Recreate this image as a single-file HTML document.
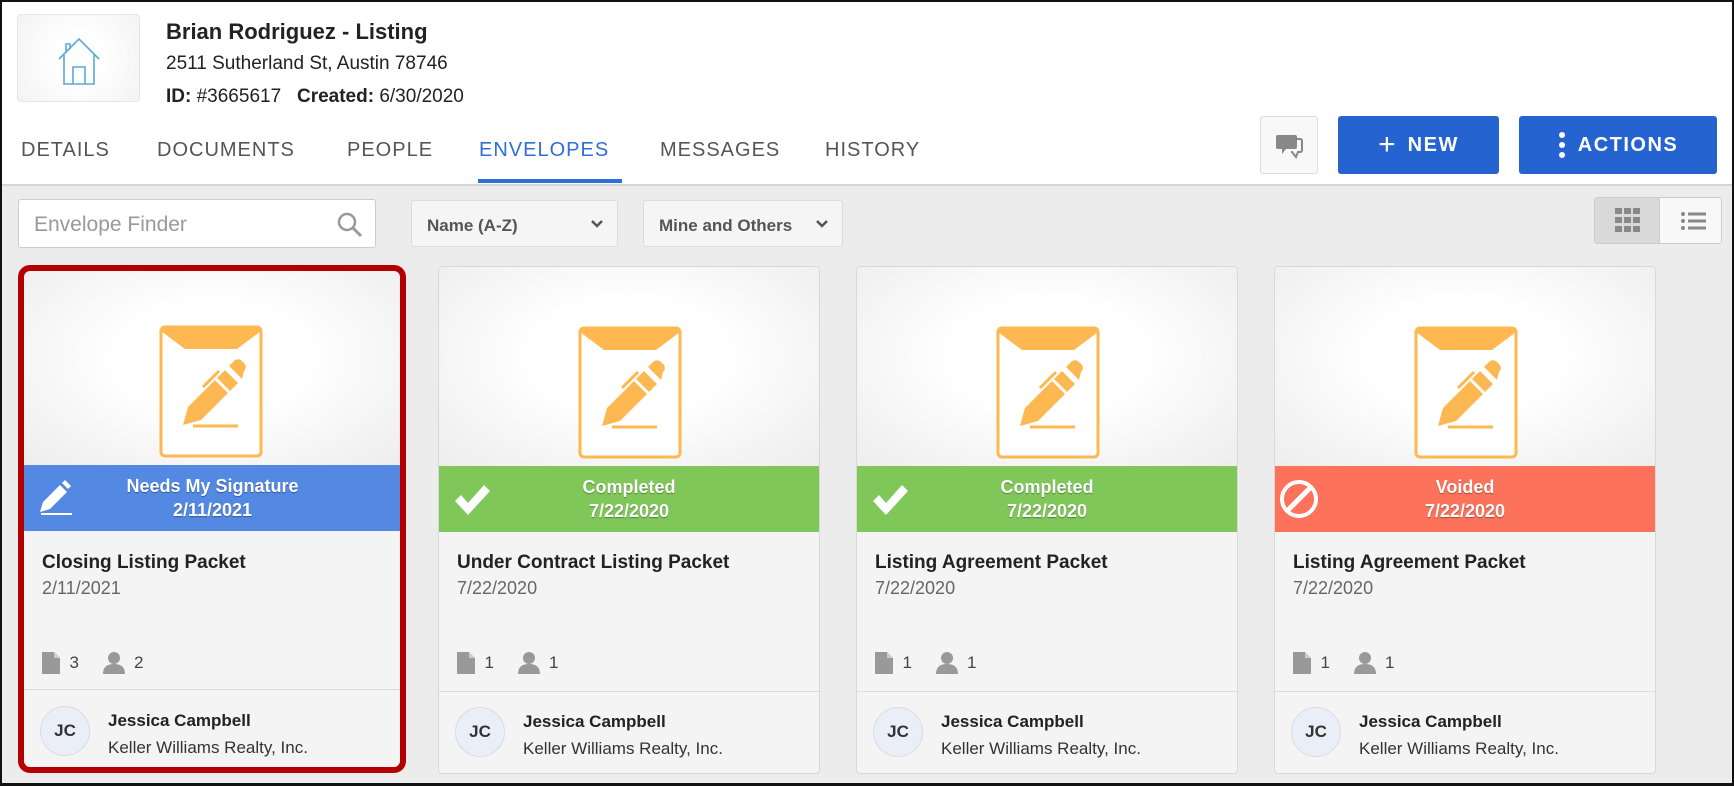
<!DOCTYPE html>
<html><head><meta charset="utf-8"><style>
*{box-sizing:border-box;margin:0;padding:0}
body{width:1734px;height:786px;overflow:hidden;font-family:"Liberation Sans",Arial,sans-serif;background:#ececec;position:relative}
.frame{position:absolute;left:0;top:0;width:1734px;height:786px;border:2px solid #111;border-bottom-width:3px;pointer-events:none;z-index:10}
.header{position:absolute;left:0;top:0;width:1734px;height:186px;background:#fff;border-bottom:2px solid #d6d6d6}
.house{position:absolute;left:17px;top:14px;width:123px;height:88px;border:1px solid #e6e6e6;border-radius:4px;background:radial-gradient(circle,#fff 30%,#f3f3f3 100%)}
.t1{position:absolute;left:166px;top:19px;font-size:22px;font-weight:bold;color:#222}
.t2{position:absolute;left:166px;top:53px;font-size:19px;color:#222}
.t3{position:absolute;left:166px;top:86px;font-size:19px;color:#222}
.tab{position:absolute;top:139px;font-size:20px;letter-spacing:1px;color:#555}
.ul{position:absolute;left:478px;top:179px;width:144px;height:4px;background:#2f6fd9}
.btn{position:absolute;top:116px;height:58px;background:#2563d0;border-radius:3px;color:#fff;font-weight:bold;font-size:20px;letter-spacing:1.5px;display:flex;align-items:center;justify-content:center}
.chat{position:absolute;left:1260px;top:116px;width:58px;height:58px;border:1px solid #ddd;border-radius:3px;background:#f8f8f8}
.search{position:absolute;left:18px;top:199px;width:358px;height:49px;border:1px solid #ccc;border-radius:3px;background:#fff;font-size:21px;color:#999;padding:13px 0 0 15px}
.dd{position:absolute;top:200px;height:47px;border:1px solid #ddd;border-radius:3px;background:#f5f5f5;font-size:17px;font-weight:bold;color:#555;padding:15px 0 0 15px}
.dd svg{position:absolute;right:14px;top:19px}
.tog{position:absolute;left:1594px;top:197px;width:128px;height:47px;border:1px solid #ccc;border-radius:3px;background:#f8f8f8;overflow:hidden}
.card{position:absolute;top:266px;width:382px;height:508px;background:#f4f4f4;border:1px solid #d8d8d8;border-radius:4px;overflow:hidden}
.img{position:absolute;left:0;top:0;width:100%;height:199px;background:radial-gradient(ellipse at 50% 45%,#fff 35%,#ededed 100%)}
.env{position:absolute;left:139px;top:59px}
.band{position:absolute;left:0;top:199px;width:100%;height:66px;color:#fff;font-weight:bold;font-size:18px;line-height:24px;text-align:center;padding-top:9px;text-shadow:0 1px 1px rgba(0,0,0,.35)}
.band svg{position:absolute;left:14px;top:15px}
.ttl{position:absolute;left:18px;top:285px;font-size:19px;font-weight:bold;color:#222}
.dt{position:absolute;left:18px;top:311px;font-size:18px;color:#666}
.cnt{position:absolute;left:18px;top:385px;font-size:17px;color:#444;display:flex;align-items:center}
.div{position:absolute;left:0;top:424px;width:100%;height:1px;background:#dcdcdc}
.av{position:absolute;left:16px;top:440px;width:50px;height:50px;border-radius:50%;background:#e9eef8;border:1px solid #dcdcdc;font-size:17px;font-weight:bold;color:#333;text-align:center;line-height:48px}
.nm{position:absolute;left:84px;top:445px;font-size:17px;font-weight:bold;color:#222}
.co{position:absolute;left:84px;top:472px;font-size:17px;color:#333}
.red{position:absolute;left:18px;top:265px;width:388px;height:508px;border:6px solid #b30000;border-radius:12px;z-index:5}
</style></head><body>
<svg width="0" height="0" style="position:absolute"><defs><g id="env"><rect x="2" y="2" width="100" height="129" rx="4" fill="#fff" stroke="#fdb851" stroke-width="3"/><path d="M2 2 H102 V6 L78 24 H26 L2 6Z" fill="#fdb851"/><path d="M24 100 L29 82 L66 45 L79 58 L42 95Z" fill="#fdb851"/><path d="M70 41 L76 35 Q80 33 83 36 L86 39 Q88 43 85 46 L83 54 Z" fill="#fdb851"/><path d="M57 54 L70 67" stroke="#fff" stroke-width="3"/><path d="M44 62 L60 46" stroke="#fdb851" stroke-width="3"/><path d="M34 101 H79" stroke="#fdb851" stroke-width="3"/></g></defs></svg>
<div class="header">
 <div class="house"><svg width="123" height="88" viewBox="0 0 123 88"><path d="M41 44 L61 24 L81 44 M46 40 V69 H76 V40 M55 69 V52 H67 V69 M48 38 V29 H52 V34" fill="none" stroke="#5aa9d8" stroke-width="1.6"/></svg></div>
 <div class="t1">Brian Rodriguez - Listing</div>
 <div class="t2">2511 Sutherland St, Austin 78746</div>
 <div class="t3"><b>ID:</b> #3665617 &nbsp;&nbsp;<b>Created:</b> 6/30/2020</div>
 <div class="tab" style="left:21px">DETAILS</div>
 <div class="tab" style="left:157px">DOCUMENTS</div>
 <div class="tab" style="left:347px">PEOPLE</div>
 <div class="tab" style="left:479px;color:#2f6fd9">ENVELOPES</div>
 <div class="tab" style="left:660px">MESSAGES</div>
 <div class="tab" style="left:825px">HISTORY</div>
 <div class="ul"></div>
 <div class="chat"><svg width="58" height="58" viewBox="0 0 58 58"><path d="M30 22 H39 Q41 22 41 24 V33 Q41 35 39 35 H37 L35 40 L31 35 H30" fill="none" stroke="#888" stroke-width="2"/><path d="M17 18 H34 Q36 18 36 20 V30 Q36 32 34 32 H25 L21 37 V32 H17 Q15 32 15 30 V20 Q15 18 17 18Z" fill="#888"/></svg></div>
 <div class="btn" style="left:1338px;width:161px"><span style="font-size:30px;font-weight:normal;margin-right:12px;letter-spacing:0">+</span>NEW</div>
 <div class="btn" style="left:1519px;width:198px"><svg width="8" height="28" style="margin-right:12px"><circle cx="4" cy="4" r="3" fill="#fff"/><circle cx="4" cy="14" r="3" fill="#fff"/><circle cx="4" cy="24" r="3" fill="#fff"/></svg>ACTIONS</div>
</div>
<div class="search">Envelope Finder<svg style="position:absolute;right:12px;top:12px" width="26" height="26"><circle cx="10" cy="10" r="8" fill="none" stroke="#999" stroke-width="2.5"/><path d="M16 16 L24 24" stroke="#999" stroke-width="3"/></svg></div>
<div class="dd" style="left:411px;width:207px">Name (A-Z)<svg width="12" height="8"><path d="M1 1 L6 6 L11 1" fill="none" stroke="#555" stroke-width="2.5"/></svg></div>
<div class="dd" style="left:643px;width:200px">Mine and Others<svg width="12" height="8"><path d="M1 1 L6 6 L11 1" fill="none" stroke="#555" stroke-width="2.5"/></svg></div>
<div class="tog"><div style="position:absolute;left:0;top:0;width:65px;height:47px;background:#d9d9d9;border-right:1px solid #ccc"></div>
<svg style="position:absolute;left:20px;top:10px" width="26" height="26"><g fill="#888"><rect x="0" y="0" width="7" height="6"/><rect x="9" y="0" width="7" height="6"/><rect x="18" y="0" width="7" height="6"/><rect x="0" y="9" width="7" height="6"/><rect x="9" y="9" width="7" height="6"/><rect x="18" y="9" width="7" height="6"/><rect x="0" y="18" width="7" height="6"/><rect x="9" y="18" width="7" height="6"/><rect x="18" y="18" width="7" height="6"/></g></svg>
<svg style="position:absolute;left:86px;top:13px" width="26" height="20"><g fill="#888"><circle cx="2" cy="3" r="2"/><circle cx="2" cy="10" r="2"/><circle cx="2" cy="17" r="2"/><rect x="7" y="1.5" width="18" height="3"/><rect x="7" y="8.5" width="18" height="3"/><rect x="7" y="15.5" width="18" height="3"/></g></svg></div>

<div class="card" style="left:24px;top:270px;width:377px;height:499px;border:none;border-radius:4px">
 <div class="img" style="height:195px"><svg class="env" style="left:135px;top:55px" width="104" height="133" viewBox="0 0 104 133"><use href="#env"/></svg></div>
 <div class="band" style="background:#5389e2;top:195px">Needs My Signature<br>2/11/2021<svg width="36" height="36" viewBox="0 0 36 36"><path d="M2 32 L5 22 L22 5 L29 12 L12 29Z" fill="#fff"/><path d="M24 3 L27 0 L33 6 L30 9Z" fill="#fff"/><path d="M3 34 H34" stroke="#fff" stroke-width="2"/></svg></div>
 <div class="ttl" style="top:282px">Closing Listing Packet</div><div class="dt" style="top:308px">2/11/2021</div>
 <div class="cnt" style="top:382px"><svg width="18" height="22"><path d="M0 0 H12 L18 6 V22 H0Z" fill="#999"/><path d="M12 0 V6 H18" fill="#ccc"/></svg>&nbsp;&nbsp;3&nbsp;&nbsp;&nbsp;&nbsp;&nbsp;<svg width="22" height="22"><circle cx="11" cy="6" r="6" fill="#999"/><path d="M0 22 Q0 12 11 12 Q22 12 22 22Z" fill="#999"/></svg>&nbsp;&nbsp;2</div>
 <div class="div" style="top:419px"></div><div class="av" style="top:436px">JC</div><div class="nm" style="top:441px">Jessica Campbell</div><div class="co" style="top:468px">Keller Williams Realty, Inc.</div>
</div>
<div class="red"></div>

<div class="card" style="left:438px">
 <div class="img"><svg class="env" width="104" height="133" viewBox="0 0 104 133"><use href="#env"/></svg></div>
 <div class="band" style="background:#80c75a">Completed<br>7/22/2020<svg width="38" height="36" viewBox="0 0 38 36"><path d="M2 20 L8 14 L15 22 L31 4 L37 10 L15 34Z" fill="#fff"/></svg></div>
 <div class="ttl">Under Contract Listing Packet</div><div class="dt">7/22/2020</div>
 <div class="cnt"><svg width="18" height="22"><path d="M0 0 H12 L18 6 V22 H0Z" fill="#999"/><path d="M12 0 V6 H18" fill="#ccc"/></svg>&nbsp;&nbsp;1&nbsp;&nbsp;&nbsp;&nbsp;&nbsp;<svg width="22" height="22"><circle cx="11" cy="6" r="6" fill="#999"/><path d="M0 22 Q0 12 11 12 Q22 12 22 22Z" fill="#999"/></svg>&nbsp;&nbsp;1</div>
 <div class="div"></div><div class="av">JC</div><div class="nm">Jessica Campbell</div><div class="co">Keller Williams Realty, Inc.</div>
</div>

<div class="card" style="left:856px">
 <div class="img"><svg class="env" width="104" height="133" viewBox="0 0 104 133"><use href="#env"/></svg></div>
 <div class="band" style="background:#80c75a">Completed<br>7/22/2020<svg width="38" height="36" viewBox="0 0 38 36"><path d="M2 20 L8 14 L15 22 L31 4 L37 10 L15 34Z" fill="#fff"/></svg></div>
 <div class="ttl">Listing Agreement Packet</div><div class="dt">7/22/2020</div>
 <div class="cnt"><svg width="18" height="22"><path d="M0 0 H12 L18 6 V22 H0Z" fill="#999"/><path d="M12 0 V6 H18" fill="#ccc"/></svg>&nbsp;&nbsp;1&nbsp;&nbsp;&nbsp;&nbsp;&nbsp;<svg width="22" height="22"><circle cx="11" cy="6" r="6" fill="#999"/><path d="M0 22 Q0 12 11 12 Q22 12 22 22Z" fill="#999"/></svg>&nbsp;&nbsp;1</div>
 <div class="div"></div><div class="av">JC</div><div class="nm">Jessica Campbell</div><div class="co">Keller Williams Realty, Inc.</div>
</div>

<div class="card" style="left:1274px">
 <div class="img"><svg class="env" width="104" height="133" viewBox="0 0 104 133"><use href="#env"/></svg></div>
 <div class="band" style="background:#fd725a">Voided<br>7/22/2020<svg width="40" height="40" viewBox="0 0 40 40" style="top:13px;left:4px"><circle cx="20" cy="20" r="17" fill="none" stroke="#fff" stroke-width="4"/><path d="M8 32 L32 8" stroke="#fff" stroke-width="5"/></svg></div>
 <div class="ttl">Listing Agreement Packet</div><div class="dt">7/22/2020</div>
 <div class="cnt"><svg width="18" height="22"><path d="M0 0 H12 L18 6 V22 H0Z" fill="#999"/><path d="M12 0 V6 H18" fill="#ccc"/></svg>&nbsp;&nbsp;1&nbsp;&nbsp;&nbsp;&nbsp;&nbsp;<svg width="22" height="22"><circle cx="11" cy="6" r="6" fill="#999"/><path d="M0 22 Q0 12 11 12 Q22 12 22 22Z" fill="#999"/></svg>&nbsp;&nbsp;1</div>
 <div class="div"></div><div class="av">JC</div><div class="nm">Jessica Campbell</div><div class="co">Keller Williams Realty, Inc.</div>
</div>
<div class="frame"></div>
</body></html>
